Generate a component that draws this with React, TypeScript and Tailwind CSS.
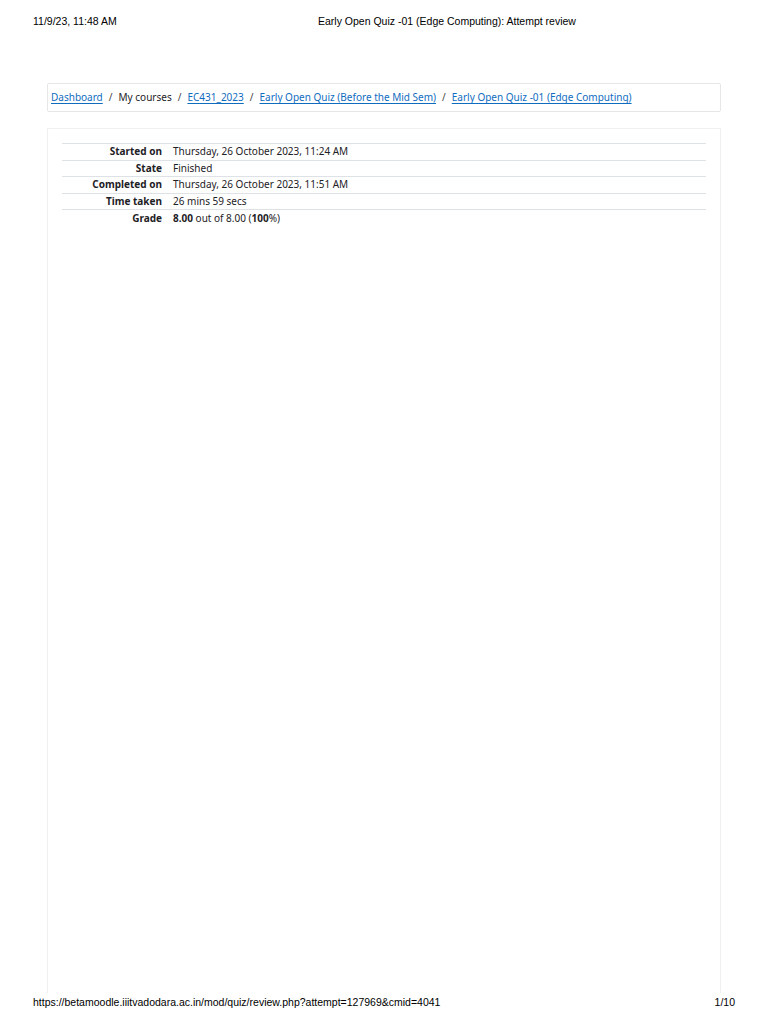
const ROWS: { label: string; value: React.ReactNode }[] = [
  { label: "Started on", value: "Thursday, 26 October 2023, 11:24 AM" },
  { label: "State", value: "Finished" },
  { label: "Completed on", value: "Thursday, 26 October 2023, 11:51 AM" },
  { label: "Time taken", value: "26 mins 59 secs" },
  {
    label: "Grade",
    value: (
      <>
        <b className="font-bold">8.00</b> out of 8.00 (<b className="font-bold">100</b>%)
      </>
    ),
  },
];

const CRUMBS = [
  { text: "Dashboard", link: true },
  { text: "My courses", link: false },
  { text: "EC431_2023", link: true },
  { text: "Early Open Quiz (Before the Mid Sem)", link: true },
  { text: "Early Open Quiz -01 (Edge Computing)", link: true },
];

export default function App() {
  return (
    <div className="w-[768px] h-[1024px] bg-white flex flex-col overflow-hidden">
      {/* print header */}
      <div className="shrink-0 h-[44px] flex items-center px-[33px] text-[10.5px] text-black font-['Liberation_Sans',Arial,sans-serif]">
        <span className="w-[285px]">11/9/23, 11:48 AM</span>
        <span>Early Open Quiz -01 (Edge Computing): Attempt review</span>
      </div>

      <div className="shrink-0 h-[949px] overflow-hidden px-[47px] pt-[39px] font-['Noto_Sans',sans-serif] text-[#1d2125] text-[10px]">
        {/* breadcrumb */}
        <div className="h-[29px] border border-[#e6e6e6] rounded-[2px] flex items-center pl-[3px]">
          {CRUMBS.map((c, i) => (
            <span key={i} className="flex items-center">
              {i > 0 && <span className="mx-[6px] text-[#444]">/</span>}
              {c.link ? (
                <span className="text-[#0f6cbf] underline underline-offset-[2px]">{c.text}</span>
              ) : (
                <span>{c.text}</span>
              )}
            </span>
          ))}
        </div>

        {/* summary card */}
        <div className="mt-[16px] h-[900px] border border-b-0 border-[#f0f0f0] px-[14px] pt-[14px]">
          <table className="w-full border-collapse">
            <tbody>
              {ROWS.map((r) => (
                <tr key={r.label} className="border-t border-[#dee2e6]">
                  <th className="w-[104px] text-right pr-[4px] font-bold align-middle h-[16.5px] leading-[15px] p-0">
                    {r.label}
                  </th>
                  <td className="pl-[7px] align-middle h-[16.5px] leading-[15px]">{r.value}</td>
                </tr>
              ))}
            </tbody>
          </table>
        </div>
      </div>

      {/* print footer */}
      <div className="shrink-0 h-[31px] flex items-start justify-between px-[33px] pt-[2px] text-[10.5px] text-black font-['Liberation_Sans',Arial,sans-serif]">
        <span>https://betamoodle.iiitvadodara.ac.in/mod/quiz/review.php?attempt=127969&amp;cmid=4041</span>
        <span>1/10</span>
      </div>
    </div>
  );
}
